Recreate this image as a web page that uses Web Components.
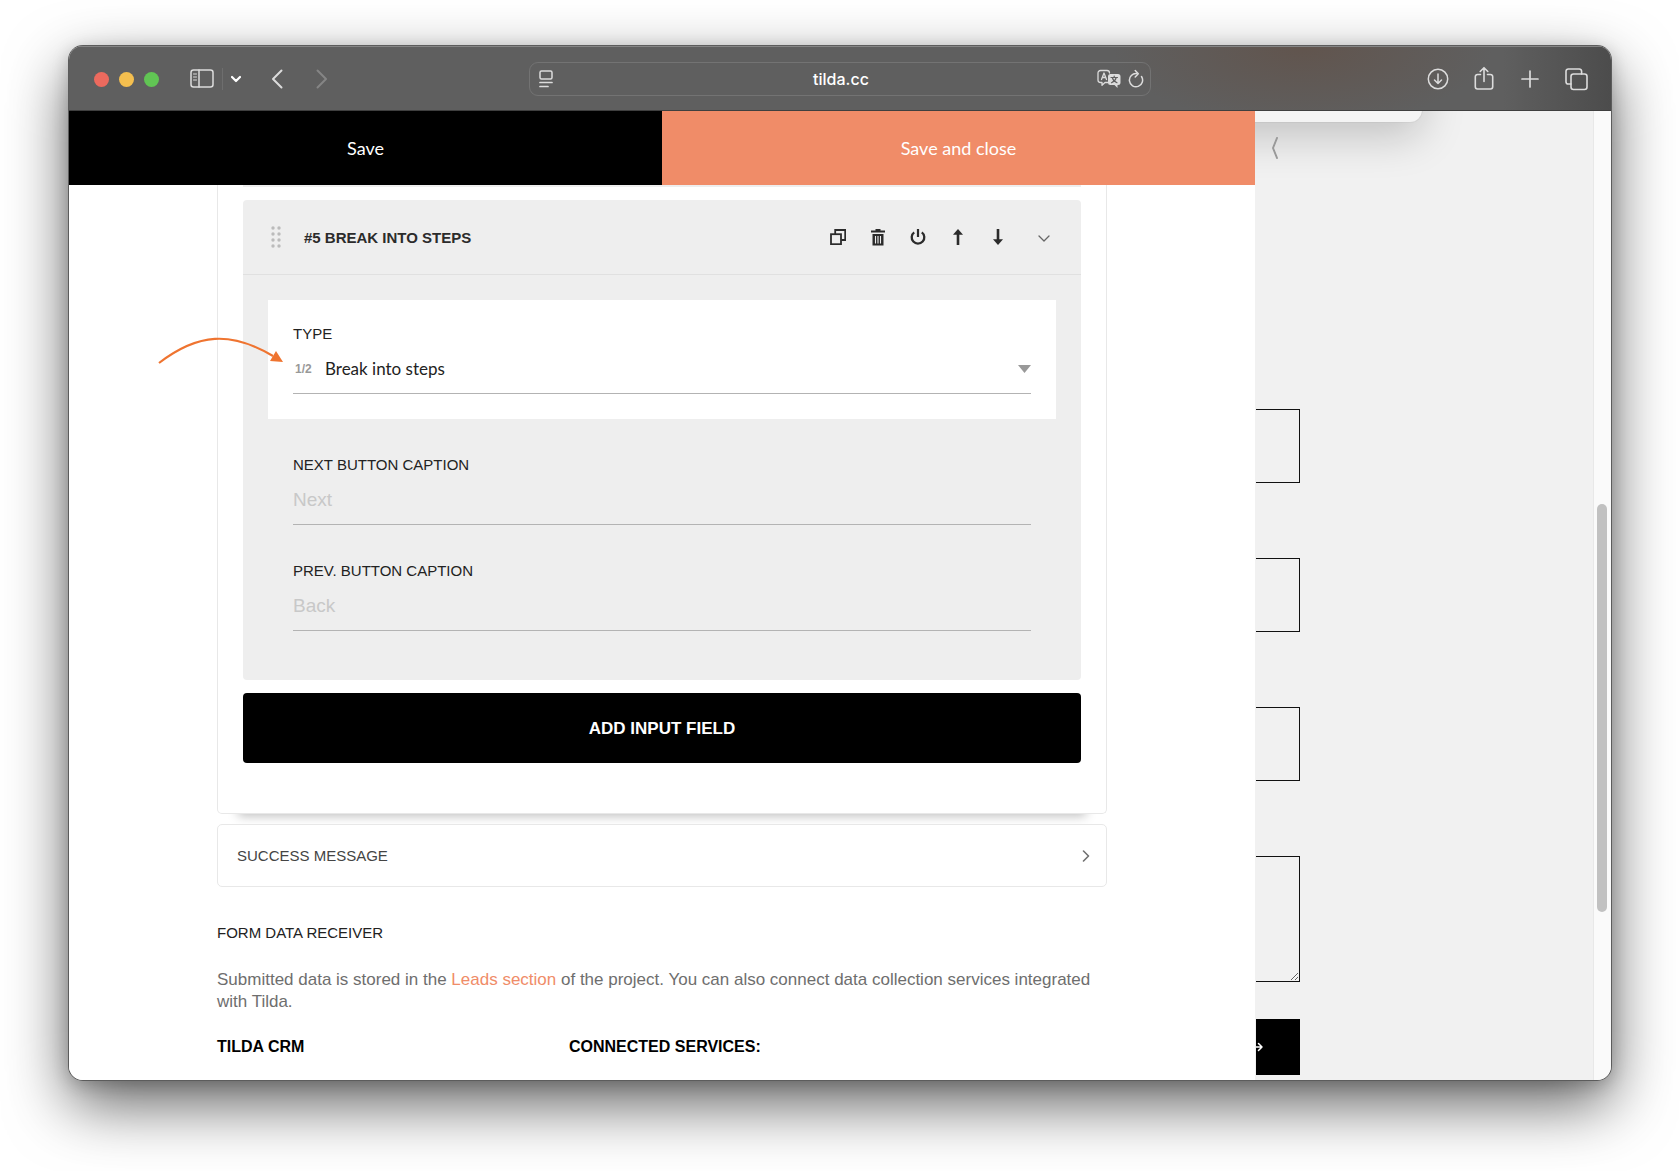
<!DOCTYPE html>
<html lang="en">
<head>
<meta charset="utf-8">
<title>tilda.cc</title>
<style>
  html, body { margin: 0; }
  body {
    display: flex;
    min-height: 100vh;
    box-sizing: border-box;
    padding: 46px 69px 91px;
    background: #fff;
    font-family: "Liberation Sans", Arial, sans-serif;
    font-size: 15px;
    line-height: 20px;
    color: #222;
  }
</style>
</head>
<body>

<browser-window>
  <browser-toolbar slot="toolbar" address="tilda.cc"></browser-toolbar>
  <form-editor>
    <field-card number="5" caption="BREAK INTO STEPS">
      <type-select label="TYPE" badge="1/2" value="Break into steps"></type-select>
      <text-field label="NEXT BUTTON CAPTION" placeholder="Next"></text-field>
      <text-field label="PREV. BUTTON CAPTION" placeholder="Back"></text-field>
    </field-card>
    <accordion-row slot="after">SUCCESS MESSAGE</accordion-row>
    <data-receiver slot="after"></data-receiver>
    <pointer-arrow slot="note"></pointer-arrow>
  </form-editor>
  <page-preview></page-preview>
  <scroll-track></scroll-track>
</browser-window>

<script>
const ICONS = {
  sidebar: [26, 20, `<rect x="2" y="1" width="22" height="17" rx="2.5" stroke-width="1.5"/><path d="M10 1v17" stroke-width="1.5"/><path d="M4.500 5h3M4.500 8h3M4.500 11h3"/>`],
  down: [10, 8, `<path d="M1 2l4 4 4-4" stroke-width="2.2"/>`],
  back: [12, 20, `<path d="M10.500 1.500L2 10l8.500 8.500" stroke-width="2"/>`],
  forward: [12, 20, `<path d="M1.500 1.500L10 10l-8.500 8.500" stroke-width="2"/>`],
  reader: [14, 18, `<rect x="1" y="1" width="12" height="8" rx="1.500" stroke-width="1.500"/><path d="M1 12.500h12M1 16.500h8" stroke-width="1.700"/>`],
  translate: [24, 20, `<path d="M11 13.500H8l-3 2.800v-2.800H3.500a2.500 2.500 0 0 1-2.500-2.500V4A2.500 2.500 0 0 1 3.500 1.500h6.500A2.500 2.500 0 0 1 12.500 4" stroke-width="1.300"/><path d="M4.500 10.500L7 4l2.500 6.500M5.300 8.500h3.400" stroke-width="1.300"/><path d="M13.500 5h7.500a2.500 2.500 0 0 1 2.500 2.500v6a2.500 2.500 0 0 1-2.500 2.500h-.5v3l-3-3h-4a2.500 2.500 0 0 1-2.500-2.500v-6A2.500 2.500 0 0 1 13.500 5z" fill="currentColor" stroke="none"/><path d="M14 8.500h6.500M17.200 7v1.500M15.300 8.700c.6 2.500 2.200 4 4.700 5M19.200 8.700c-.6 2.500-2.200 4-4.700 5" stroke="#5f5f5f" stroke-width="1.200"/>`],
  reload: [16, 20, `<path d="M13.500 7.500a6.600 6.600 0 1 1-4.700-2.900" stroke-width="1.500"/><path d="M7.200 1.500L10.300 4.700 7.200 7.900" stroke-width="1.500"/>`],
  download: [24, 24, `<circle cx="12" cy="12" r="9.700" stroke-width="1.500"/><path d="M12 7v9.500M8.500 13l3.500 3.500 3.500-3.500" stroke-width="1.500"/>`],
  share: [24, 26, `<path d="M8.500 8.500H5.500A2.200 2.200 0 0 0 3.300 10.700v10.100A2.200 2.200 0 0 0 5.500 23h13a2.200 2.200 0 0 0 2.200-2.200V10.700a2.200 2.200 0 0 0-2.200-2.200h-3M12 15.500V2M8.200 5.500L12 1.700l3.800 3.800" stroke-width="1.600"/>`],
  plus: [24, 24, `<path d="M12 4v16M4 12h16" stroke-width="1.700"/>`],
  tabs: [24, 24, `<rect x="7" y="7" width="16" height="15.500" rx="2.500" stroke-width="1.600"/><path d="M7 17H4.300A2.300 2.300 0 0 1 2 14.700V4.300A2.300 2.300 0 0 1 4.300 2h11a2.300 2.300 0 0 1 2.300 2.300V7" stroke-width="1.600"/>`],
  grip: [10, 22, `<g fill="currentColor" stroke="none"><circle cx="2" cy="2" r="1.700"/><circle cx="8" cy="2" r="1.700"/><circle cx="2" cy="8" r="1.700"/><circle cx="8" cy="8" r="1.700"/><circle cx="2" cy="14" r="1.700"/><circle cx="8" cy="14" r="1.700"/><circle cx="2" cy="20" r="1.700"/><circle cx="8" cy="20" r="1.700"/></g>`],
  copy: [16, 16, `<g stroke-linecap="butt" stroke-linejoin="miter" stroke-width="1.800"><rect x="1" y="5.200" width="10" height="10"/><path d="M5.200 5V1h10v10h-4"/></g>`],
  trash: [16, 18, `<g fill="currentColor" stroke="none"><path d="M1 2.500h4.500V1h5v1.500H15v2H1z"/><path d="M2.500 6h11v11.500h-11z"/></g><path d="M5.500 8v7.500M8 8v7.500M10.500 8v7.500" stroke="#eee" stroke-width="1.100" stroke-linecap="butt"/>`],
  power: [16, 18, `<path d="M4.200 4.300a6.300 6.300 0 1 0 7.600 0" stroke-width="2.300" stroke-linecap="butt"/><path d="M8 1v8" stroke-width="2.200" stroke-linecap="butt"/>`],
  up: [12, 16, `<path d="M6 4v12" stroke-width="2.600" stroke-linecap="butt"/><path d="M6 0l5 5.700H1z" fill="currentColor" stroke="none"/>`],
  lower: [12, 16, `<path d="M6 0v12" stroke-width="2.600" stroke-linecap="butt"/><path d="M6 16l5-5.700H1z" fill="currentColor" stroke="none"/>`],
  fold: [12, 8, `<path d="M1 1l5 5 5-5" stroke-width="1.300"/>`],
  next: [8, 12, `<path d="M1.500 1l5 5-5 5" stroke-width="1.600"/>`],
  caret: [14, 8, `<path d="M1 0h13L7.500 8z" fill="currentColor" stroke="none"/>`],
  hide: [8, 22, `<path d="M6 1L2 11l4 10" stroke-width="2"/>`],
  arrow: [8, 10, `<path d="M0 5h6M2.500 1.500L6 5 2.500 8.500" stroke-width="1.500"/>`]
};

class UiIcon extends HTMLElement {
  constructor(){
    super();
    this.attachShadow({ mode: "open" });
  }

  connectedCallback(){
    const [w, h, shape] = ICONS[this.getAttribute("name")];
    this.shadowRoot.innerHTML = `
      <style>
        :host { display: inline-flex; flex: none; }
        svg { display: block; }
      </style>
      <svg width="${w}" height="${h}" viewBox="0 0 ${w} ${h}" fill="none" stroke="currentColor"
        stroke-linecap="round" stroke-linejoin="round" aria-hidden="true">${shape}</svg>
    `;
  }
}
customElements.define("ui-icon", UiIcon);

class BrowserWindow extends HTMLElement {
  constructor(){
    super();
    this.attachShadow({ mode: "open" });
    this.shadowRoot.innerHTML = `
      <style>
        :host {
          flex: 1;
          min-width: 0;
          display: flex;
          flex-direction: column;
          border-radius: 14px;
          overflow: hidden;
          background: #fff;
          box-shadow:
            0 0 0 1px #5c5c5c,
            0 4px 18px rgba(0, 0, 0, .2),
            0 24px 62px rgba(0, 0, 0, .62);
        }
        main { flex: 1; display: flex; min-height: 0; }
      </style>
      <slot name="toolbar"></slot>
      <main><slot></slot></main>
    `;
  }
}
customElements.define("browser-window", BrowserWindow);

class BrowserToolbar extends HTMLElement {
  constructor(){
    super();
    this.attachShadow({ mode: "open" });
  }

  connectedCallback(){
    this.shadowRoot.innerHTML = `
      <style>
        :host {
          display: grid;
          grid-template-columns: 1fr minmax(200px, 622px) 1fr;
          align-items: center;
          height: 65px;
          box-sizing: border-box;
          padding-top: 2px;
          border-bottom: 1px solid #3f3f3f;
          box-shadow: inset 0 1px #858585;
          color: #dcdcdc;
          background:
            radial-gradient(ellipse 190px 80px at 80% 0, rgba(98, 80, 70, .7), transparent),
            linear-gradient(to right, #5f5f5f 93%, #4c4c4c);
        }
        button {
          display: flex;
          align-items: center;
          justify-content: center;
          padding: 0;
          border: 0;
          background: none;
          color: inherit;
        }
        .left { display: flex; align-items: center; padding-left: 25px; }
        .lights { display: flex; gap: 10px; margin-right: 30px; }
        .lights button { width: 15px; height: 15px; border-radius: 50%; background: #ec6a5e; }
        .lights button:nth-child(2) { background: #f4bf4f; }
        .lights button:nth-child(3) { background: #61c554; }
        .rule { width: 1px; height: 22px; margin: 0 8px 0 7px; background: #6e6e6e; }
        .menu { color: #fff; }
        .back { margin: 0 33px 0 30px; }
        .forward { color: #858585; }
        .address {
          display: flex;
          align-items: center;
          height: 34px;
          box-sizing: border-box;
          padding: 0 6px 0 9px;
          border: 1px solid #737373;
          border-radius: 9px;
        }
        .address input {
          flex: 1;
          min-width: 0;
          padding: 0 0 0 32px;
          border: 0;
          background: none;
          color: #fff;
          font: 500 16px/20px Inter, sans-serif;
          text-align: center;
          outline: 0;
        }
        .address .reload { margin-left: 7px; }
        .right { display: flex; justify-content: flex-end; gap: 22px; padding-right: 23px; }
      </style>
      <div class="left">
        <div class="lights">
          <button aria-label="Close"></button>
          <button aria-label="Minimize"></button>
          <button aria-label="Zoom"></button>
        </div>
        <button aria-label="Sidebar"><ui-icon name="sidebar"></ui-icon></button>
        <span class="rule"></span>
        <button class="menu" aria-label="Tab groups"><ui-icon name="down"></ui-icon></button>
        <button class="back" aria-label="Back"><ui-icon name="back"></ui-icon></button>
        <button class="forward" aria-label="Forward"><ui-icon name="forward"></ui-icon></button>
      </div>
      <div class="address">
        <button aria-label="Reader"><ui-icon name="reader"></ui-icon></button>
        <input type="text" aria-label="Address" value="${this.getAttribute("address")}">
        <button aria-label="Translate"><ui-icon name="translate"></ui-icon></button>
        <button class="reload" aria-label="Reload"><ui-icon name="reload"></ui-icon></button>
      </div>
      <div class="right">
        <button aria-label="Downloads"><ui-icon name="download"></ui-icon></button>
        <button aria-label="Share"><ui-icon name="share"></ui-icon></button>
        <button aria-label="New tab"><ui-icon name="plus"></ui-icon></button>
        <button aria-label="Show tabs"><ui-icon name="tabs"></ui-icon></button>
      </div>
    `;
  }
}
customElements.define("browser-toolbar", BrowserToolbar);

class FormEditor extends HTMLElement {
  constructor(){
    super();
    this.attachShadow({ mode: "open" });
    this.shadowRoot.innerHTML = `
      <style>
        :host { position: relative; flex: 1; min-width: 0; display: block; background: #fff; }
        .bar { display: grid; grid-template-columns: 1fr 1fr; height: 74px; }
        .bar button {
          border: 0;
          background: #000;
          color: #fff;
          font: 18px/24px Lato, sans-serif;
        }
        .bar button:last-child { background: #f08c68; }
        .column { margin: 0 148px; }
        .fields {
          padding: 0 25px 50px;
          border: 1px solid #e8e8e8;
          border-top: 0;
          border-radius: 0 0 5px 5px;
          box-shadow: 0 23px 10px -21px rgba(0, 0, 0, .26);
        }
        .previous { height: 2px; margin-bottom: 13px; background: #eee; }
        .add {
          display: block;
          width: 100%;
          height: 70px;
          margin-top: 13px;
          padding: 2px 0 0;
          border: 0;
          border-radius: 4px;
          background: #000;
          color: #fff;
          font: bold 17px/20px "Liberation Sans", Arial, sans-serif;
        }
      </style>
      <div class="bar">
        <button>Save</button>
        <button>Save and close</button>
      </div>
      <div class="column">
        <div class="fields">
          <div class="previous"></div>
          <slot></slot>
          <button class="add">ADD INPUT FIELD</button>
        </div>
        <slot name="after"></slot>
      </div>
      <slot name="note"></slot>
    `;
  }
}
customElements.define("form-editor", FormEditor);

class FieldCard extends HTMLElement {
  constructor(){
    super();
    this.attachShadow({ mode: "open" });
  }

  connectedCallback(){
    this.shadowRoot.innerHTML = `
      <style>
        :host { display: block; border-radius: 4px; background: #eee; }
        header {
          display: flex;
          align-items: center;
          height: 74px;
          padding: 0 17px 0 28px;
          border-bottom: 1px solid #e0e0e0;
          color: #2b2b2b;
        }
        .grip { color: #bbb; }
        h3 { flex: 1; margin: 2px 0 0 23px; font-size: 15px; line-height: 20px; }
        button {
          display: flex;
          align-items: center;
          justify-content: center;
          width: 40px;
          height: 40px;
          padding: 0;
          border: 0;
          background: none;
          color: inherit;
        }
        .fold { margin-left: 6px; padding-top: 4px; color: #666; }
        .body { display: flex; flex-direction: column; gap: 36px; padding: 25px 25px 49px; }
      </style>
      <header>
        <ui-icon class="grip" name="grip"></ui-icon>
        <h3>#${this.getAttribute("number")} ${this.getAttribute("caption")}</h3>
        <button aria-label="Duplicate"><ui-icon name="copy"></ui-icon></button>
        <button aria-label="Delete"><ui-icon name="trash"></ui-icon></button>
        <button aria-label="Turn off"><ui-icon name="power"></ui-icon></button>
        <button aria-label="Move up"><ui-icon name="up"></ui-icon></button>
        <button aria-label="Move down"><ui-icon name="lower"></ui-icon></button>
        <button class="fold" aria-label="Collapse"><ui-icon name="fold"></ui-icon></button>
      </header>
      <div class="body"><slot></slot></div>
    `;
  }
}
customElements.define("field-card", FieldCard);

class TypeSelect extends HTMLElement {
  constructor(){
    super();
    this.attachShadow({ mode: "open" });
  }

  connectedCallback(){
    this.shadowRoot.innerHTML = `
      <style>
        :host { display: block; padding: 24px 25px 25px; background: #fff; }
        label { display: block; }
        .control {
          display: grid;
          grid-template-columns: 32px 1fr;
          align-items: center;
          height: 50px;
          box-sizing: border-box;
          border-bottom: 1px solid #b3b3b3;
        }
        .badge { padding-left: 2px; font-size: 12px; font-weight: bold; color: #999; }
        select {
          grid-area: 1 / 2;
          appearance: none;
          width: 100%;
          height: 49px;
          padding: 0;
          border: 0;
          background: none;
          color: #222;
          font: 17px/24px Lato, sans-serif;
          outline: 0;
        }
        ui-icon { grid-area: 1 / 2; justify-self: end; color: #999; pointer-events: none; }
      </style>
      <label for="type">${this.getAttribute("label")}</label>
      <div class="control">
        <span class="badge">${this.getAttribute("badge")}</span>
        <select id="type"><option>${this.getAttribute("value")}</option></select>
        <ui-icon name="caret"></ui-icon>
      </div>
    `;
  }
}
customElements.define("type-select", TypeSelect);

class TextField extends HTMLElement {
  constructor(){
    super();
    this.attachShadow({ mode: "open" });
  }

  connectedCallback(){
    this.shadowRoot.innerHTML = `
      <style>
        :host { display: block; padding: 0 25px; }
        label { display: block; }
        input {
          display: block;
          width: 100%;
          height: 50px;
          box-sizing: border-box;
          padding: 0;
          border: 0;
          border-bottom: 1px solid #b3b3b3;
          background: none;
          font: 19px/24px "Liberation Sans", Arial, sans-serif;
          outline: 0;
        }
        input::placeholder { color: #c8c8c8; }
      </style>
      <label for="field">${this.getAttribute("label")}</label>
      <input id="field" type="text" placeholder="${this.getAttribute("placeholder")}">
    `;
  }
}
customElements.define("text-field", TextField);

class AccordionRow extends HTMLElement {
  constructor(){
    super();
    this.attachShadow({ mode: "open" });
    this.shadowRoot.innerHTML = `
      <style>
        :host { display: block; margin-top: 10px; }
        button {
          display: flex;
          align-items: center;
          justify-content: space-between;
          width: 100%;
          height: 63px;
          padding: 0 16px 0 19px;
          border: 1px solid #e8e8e8;
          border-radius: 5px;
          background: #fff;
          color: #444;
          font: inherit;
        }
        ui-icon { color: #707070; }
      </style>
      <button><slot></slot><ui-icon name="next"></ui-icon></button>
    `;
  }
}
customElements.define("accordion-row", AccordionRow);

class DataReceiver extends HTMLElement {
  constructor(){
    super();
    this.attachShadow({ mode: "open" });
    this.shadowRoot.innerHTML = `
      <style>
        :host { display: block; margin-top: 36px; }
        h2, h3, p { margin: 0; }
        h2 { font-size: 15px; font-weight: normal; line-height: 20px; }
        p { margin: 26px 0 24px; font-size: 17px; line-height: 22px; color: #6e6e6e; }
        a { color: #f08c68; text-decoration: none; }
        .columns { display: grid; grid-template-columns: 352px 1fr; color: #000; }
        h3 { font-size: 16px; line-height: 20px; }
      </style>
      <h2>FORM DATA RECEIVER</h2>
      <p>Submitted data is stored in the <a href="#leads">Leads section</a> of the project. You can also connect data collection services integrated with Tilda.</p>
      <div class="columns">
        <h3>TILDA CRM</h3>
        <h3>CONNECTED SERVICES:</h3>
      </div>
    `;
  }
}
customElements.define("data-receiver", DataReceiver);

// hand-drawn pointer that lies over the editor
class PointerArrow extends HTMLElement {
  constructor(){
    super();
    this.attachShadow({ mode: "open" });
    this.shadowRoot.innerHTML = `
      <style>
        :host { position: absolute; left: 88px; top: 225px; pointer-events: none; }
        svg { display: block; }
      </style>
      <svg width="128" height="32" viewBox="0 0 128 32" fill="none" aria-hidden="true">
        <path d="M2 27C41-3 74-5 116 20" stroke="#ef7430" stroke-width="2.200"/>
        <path d="M126 26l-13-1 6-10z" fill="#ef7430"/>
      </svg>
    `;
  }
}
customElements.define("pointer-arrow", PointerArrow);

class PagePreview extends HTMLElement {
  constructor(){
    super();
    this.attachShadow({ mode: "open" });
    this.shadowRoot.innerHTML = `
      <style>
        :host {
          position: relative;
          flex: none;
          display: block;
          width: 338px;
          overflow: hidden;
          background: #f1f1f1;
        }
        .popover {
          position: absolute;
          left: -60px;
          top: -60px;
          width: 227px;
          height: 71px;
          border-radius: 12px;
          background: #f4f4f4;
          box-shadow: 0 14px 44px rgba(0, 0, 0, .2), 0 0 0 1px #e9e9e9;
        }
        .hide {
          display: flex;
          margin: 26px 0 0 16px;
          padding: 0;
          border: 0;
          background: none;
          color: #999;
          position: relative;
        }
        form { display: flex; flex-direction: column; gap: 75px; margin: 250px 0 0 1px; }
        input, textarea {
          display: block;
          width: 44px;
          height: 74px;
          box-sizing: border-box;
          border: 1px solid #111;
          border-left: 0;
          border-radius: 0;
          background: none;
          outline: 0;
        }
        textarea { height: 126px; resize: both; }
        .send {
          display: flex;
          align-items: center;
          width: 44px;
          height: 56px;
          margin-top: -38px;
          padding: 0;
          border: 0;
          background: #000;
          color: #fff;
        }
      </style>
      <div class="popover"></div>
      <button class="hide" aria-label="Hide panel"><ui-icon name="hide"></ui-icon></button>
      <form>
        <input type="text" aria-label="Name">
        <input type="text" aria-label="Email">
        <input type="text" aria-label="Phone">
        <textarea aria-label="Message"></textarea>
        <button type="button" class="send" aria-label="Next step"><ui-icon name="arrow"></ui-icon></button>
      </form>
    `;
  }
}
customElements.define("page-preview", PagePreview);

class ScrollTrack extends HTMLElement {
  constructor(){
    super();
    this.attachShadow({ mode: "open" });
    this.shadowRoot.innerHTML = `
      <style>
        :host {
          flex: none;
          display: grid;
          grid-template-rows: 393fr 408fr 168fr;
          width: 18px;
          box-sizing: border-box;
          padding: 0 4px 0 3px;
          border-left: 1px solid #e8e8e8;
          background: #fafafa;
        }
        div { grid-row: 2; border-radius: 5px; background: #c1c1c1; }
      </style>
      <div></div>
    `;
  }
}
customElements.define("scroll-track", ScrollTrack);
</script>
</body>
</html>
